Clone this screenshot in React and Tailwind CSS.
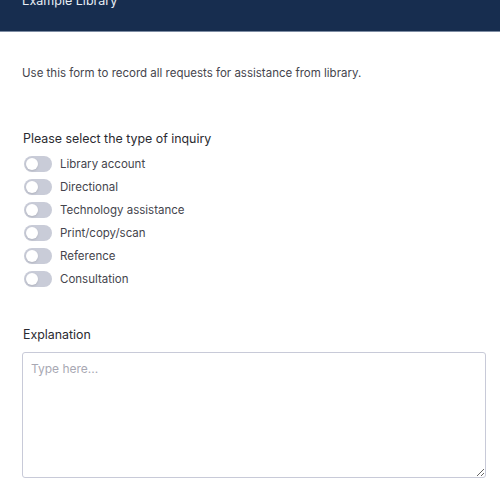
import React, { useState } from 'react';

const options = [
  'Library account',
  'Directional',
  'Technology assistance',
  'Print/copy/scan',
  'Reference',
  'Consultation',
];

const Toggle = ({ on, onClick }) => (
  <button
    type="button"
    onClick={onClick}
    className={`w-[28px] h-[16px] rounded-full p-[2px] flex items-center transition-colors ${on ? 'bg-[#1e3a63] justify-end' : 'bg-[#c9ccd8] justify-start'}`}
  >
    <span className="w-[12px] h-[12px] rounded-full bg-white shadow-sm" />
  </button>
);

const App = () => {
  const [checked, setChecked] = useState({});

  return (
    <div className="min-h-screen bg-white font-['Inter',sans-serif] text-[#3f3f46]">
      {/* Header (page is scrolled, title partly hidden) */}
      <div className="h-[32px] bg-[#172d4f] border-b border-[#7d8ca3] overflow-hidden px-[22px]">
        <div className="-mt-[9px] text-[12.5px] leading-5 text-[#e8edf4]">Example Library</div>
      </div>

      <div className="px-[22px]">
        <p className="mt-[31px] text-[11.5px] leading-5 text-[#45454d]">
          Use this form to record all requests for assistance from library.
        </p>

        <h3 className="mt-[46px] text-[12.4px] leading-5 pl-[1px] text-[#2a2a30]">Please select the type of inquiry</h3>
        <div className="mt-[7px] flex flex-col gap-[7px] pl-[2px]">
          {options.map((o) => (
            <label key={o} className="flex items-center gap-[8px] cursor-pointer">
              <Toggle on={!!checked[o]} onClick={() => setChecked({ ...checked, [o]: !checked[o] })} />
              <span className="text-[11.5px] leading-4 text-[#45454d]">{o}</span>
            </label>
          ))}
        </div>

        <h3 className="mt-[38px] text-[12.4px] leading-5 pl-[1px] text-[#2a2a30]">Explanation</h3>
        <textarea
          placeholder="Type here..."
          className="mt-[7px] w-[464px] h-[126px] block border border-[#c8cad8] rounded-[3px] px-[8px] py-[6px] text-[12px] leading-5 placeholder-[#a8a8b3] focus:outline-none"
        />
      </div>
    </div>
  );
};

export default App;
